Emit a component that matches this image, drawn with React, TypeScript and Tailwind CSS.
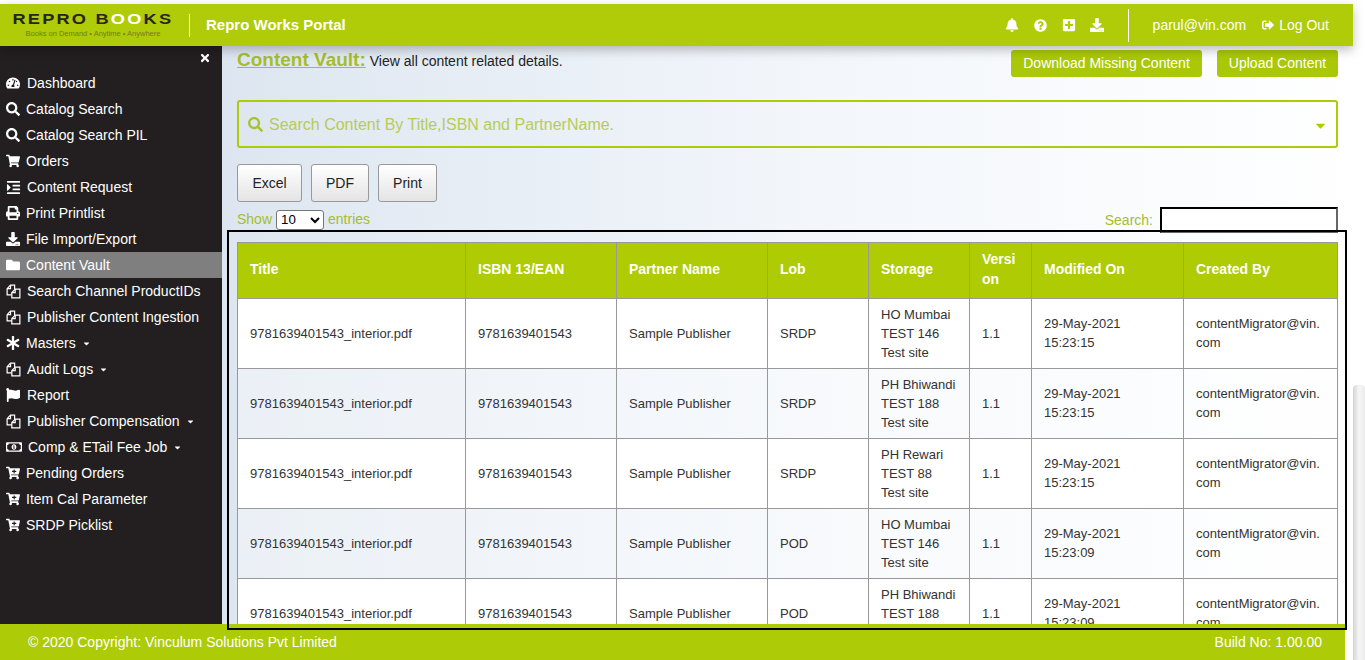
import { IconType } from "react-icons";
import {
  FaBell,
  FaCaretDown,
  FaCartPlus,
  FaDownload,
  FaFolder,
  FaIndent,
  FaPlusSquare,
  FaPrint,
  FaQuestionCircle,
  FaRegMoneyBillAlt,
  FaSearch,
  FaShoppingCart,
  FaSignOutAlt,
  FaTachometerAlt,
  FaTimes,
  FaAsterisk,
  FaFlag,
} from "react-icons/fa";

// font awesome 4 "files-o", the packaged one looks different
const FilesIcon: IconType = ({ className }) => (
  <svg viewBox="0 0 16 16" fill="none" stroke="currentColor" strokeWidth="1.3" className={className}>
    <path d="M6 11.5H1.2V5L4.8 1.2H9.2V5.5" />
    <path d="M4.8 1.2V5H1.2" />
    <path d="M6.2 9.2L9.8 5.5H14.8V14.8H6.2Z" />
    <path d="M9.8 5.5V9.2H6.2" />
  </svg>
);

const menu: { label: string; icon: IconType; caret?: boolean; active?: boolean; w?: string; size?: string }[] = [
  { label: "Dashboard", icon: FaTachometerAlt, w: "w-[21px]" },
  { label: "Catalog Search", icon: FaSearch },
  { label: "Catalog Search PIL", icon: FaSearch },
  { label: "Orders", icon: FaShoppingCart },
  { label: "Content Request", icon: FaIndent, w: "w-[21px]", size: "h-[15px] w-[15px]" },
  { label: "Print Printlist", icon: FaPrint },
  { label: "File Import/Export", icon: FaDownload },
  { label: "Content Vault", icon: FaFolder },
  { label: "Search Channel ProductIDs", icon: FilesIcon, w: "w-[21px]", size: "h-[15px] w-[15px]" },
  { label: "Publisher Content Ingestion", icon: FilesIcon, w: "w-[21px]", size: "h-[15px] w-[15px]" },
  { label: "Masters", icon: FaAsterisk, caret: true },
  { label: "Audit Logs", icon: FilesIcon, caret: true, w: "w-[21px]", size: "h-[15px] w-[15px]" },
  { label: "Report", icon: FaFlag, w: "w-[21px]" },
  { label: "Publisher Compensation", icon: FilesIcon, caret: true, w: "w-[21px]", size: "h-[15px] w-[15px]" },
  { label: "Comp & ETail Fee Job", icon: FaRegMoneyBillAlt, caret: true, w: "w-[22px]", size: "h-[16px] w-[16px]" },
  { label: "Pending Orders", icon: FaCartPlus },
  { label: "Item Cal Parameter", icon: FaCartPlus },
  { label: "SRDP Picklist", icon: FaCartPlus },
];

const rows = [
  { lob: "SRDP", storage: ["HO Mumbai", "TEST 146", "Test site"], time: "15:23:15" },
  { lob: "SRDP", storage: ["PH Bhiwandi", "TEST 188", "Test site"], time: "15:23:15" },
  { lob: "SRDP", storage: ["PH Rewari", "TEST 88", "Test site"], time: "15:23:15" },
  { lob: "POD", storage: ["HO Mumbai", "TEST 146", "Test site"], time: "15:23:09" },
  { lob: "POD", storage: ["PH Bhiwandi", "TEST 188", "Test site"], time: "15:23:09" },
];

const th = "border border-[#999] px-3 pb-[4px] text-left align-middle font-bold text-white text-[14px] leading-[20px]";
const td = "border border-[#999] px-3 align-middle text-[13px] leading-[19px] text-[#333]";

const Sidebar = () => (
  <aside className="w-[222px] shrink-0 bg-[#231f20] text-white">
    <div className="flex h-[24px] items-center justify-end pr-[11px]">
      <FaTimes className="h-[12px] w-[12px]" />
    </div>
    <ul>
      {menu.map((m) => (
        <li
          key={m.label}
          className={`flex h-[26px] items-center pl-[6px] text-[14px] ${m.label === "Content Vault" ? "bg-[#7f7f7f]" : ""}`}
        >
          <span className={`flex shrink-0 items-center ${m.w ?? "w-[20px]"}`}>
            <m.icon className={m.size ?? "h-[14px] w-[14px]"} />
          </span>
          <span>{m.label}</span>
          {m.caret && <FaCaretDown className="ml-[6px] h-[9px] w-[9px]" />}
        </li>
      ))}
    </ul>
  </aside>
);

export default function App() {
  return (
    <div className="relative h-[660px] w-[1365px] overflow-hidden bg-white font-['Liberation_Sans',Arial,sans-serif]">
      <div className="h-[4px]" />
      <header className="relative z-10 flex h-[42px] w-[1353px] items-center bg-[#b0cb07] text-white shadow-[0_4px_10px_rgba(0,0,0,0.25)]">
        <div className="flex w-[189px] shrink-0 flex-col items-center pr-[3px]">
          <div className="text-[14px] font-bold leading-[15px] tracking-[1.7px] text-[#26261c] [transform:scaleX(1.3)]">
            REPRO B<span className="text-white">OO</span>KS
          </div>
          <div className="mt-[2px] text-[7.5px] leading-[10px] text-[#6f7f20]">Books on Demand • Anytime • Anywhere</div>
        </div>
        <div className="h-[23px] w-px bg-white" />
        <div className="ml-[16px] text-[15px] font-bold">Repro Works Portal</div>
        <div className="ml-auto flex items-center">
          <FaBell className="h-[14px] w-[14px]" />
          <FaQuestionCircle className="ml-[15px] h-[13px] w-[13px]" />
          <FaPlusSquare className="ml-[15px] h-[14px] w-[14px]" />
          <FaDownload className="ml-[14px] h-[14px] w-[14px]" />
          <div className="ml-[24px] h-[33px] w-px bg-white" />
          <span className="ml-[24px] text-[14px]">parul@vin.com</span>
          <FaSignOutAlt className="ml-[16px] h-[12px] w-[12px]" />
          <span className="ml-[5px] mr-[24px] text-[14px]">Log Out</span>
        </div>
      </header>

      <div className="flex h-[578px]">
        <Sidebar />
        <main className="h-full flex-1 overflow-hidden bg-gradient-to-r from-[#dde6f0] via-[#f2f6fb] to-white pl-[15px] pr-[27px]">
          <div className="flex h-[54px] items-start justify-between">
            <div className="flex items-baseline">
              <span className="text-[19px] font-bold text-[#a5bd2e] underline">Content Vault:</span>
              <span className="ml-[4px] text-[14px] text-[#222]">View all content related details.</span>
            </div>
            <div className="mt-[4px] flex gap-[15px]">
              <button className="h-[27px] w-[191px] rounded-[3px] bg-[#aac808] text-[14px] text-white">Download Missing Content</button>
              <button className="h-[27px] w-[121px] rounded-[3px] bg-[#aac808] text-[14px] text-white">Upload Content</button>
            </div>
          </div>

          <div className="flex h-[48px] items-center rounded-[3px] border-2 border-[#aecb07] pl-[9px] pr-[8px]">
            <FaSearch className="h-[15px] w-[15px] text-[#a9c234]" />
            <span className="ml-[6px] mt-[1px] text-[16px] text-[#b7cc55]">Search Content By Title,ISBN and PartnerName.</span>
            <FaCaretDown className="ml-auto mt-[2px] h-[15px] w-[15px] text-[#aecb07]" />
          </div>

          <div className="mt-[16px] flex gap-[9px]">
            {[["Excel", "w-[65px]"], ["PDF", "w-[58px]"], ["Print", "w-[59px]"]].map(([t, w]) => (
              <button
                key={t}
                className={`h-[38px] ${w} rounded-[3px] border border-[#999] bg-gradient-to-b from-white to-[#e4e4e4] text-[14px] text-[#222]`}
              >
                {t}
              </button>
            ))}
          </div>

          <div className="mt-[5px] flex h-[35px] items-start justify-between text-[14px] text-[#a5bd2e]">
            <div className="mt-[2px] flex items-center">
              <span>Show</span>
              <select className="mx-[4px] h-[20px] w-[48px] rounded-[3px] border border-[#767676] bg-white text-[13.3px] text-black">
                <option>10</option>
              </select>
              <span>entries</span>
            </div>
            <div className="flex items-start">
              <span className="mr-[7px] mt-[3px]">Search:</span>
              <input className="h-[26px] w-[178px] border-2 border-black border-r-[#666] border-b-[#666] bg-white" />
            </div>
          </div>

          <table className="w-[1100px] table-fixed border-collapse">
            <colgroup>
              <col className="w-[228px]" />
              <col className="w-[151px]" />
              <col className="w-[151px]" />
              <col className="w-[101px]" />
              <col className="w-[101px]" />
              <col className="w-[62px]" />
              <col className="w-[152px]" />
              <col className="w-[154px]" />
            </colgroup>
            <thead>
              <tr className="h-[56px] bg-[#aecb04]">
                <th className={th}>Title</th>
                <th className={th}>ISBN 13/EAN</th>
                <th className={th}>Partner Name</th>
                <th className={th}>Lob</th>
                <th className={th}>Storage</th>
                <th className={th}>
                  Versi
                  <br />
                  on
                </th>
                <th className={th}>Modified On</th>
                <th className={th}>Created By</th>
              </tr>
            </thead>
            <tbody>
              {rows.map((r, i) => (
                <tr key={i} className={`h-[70px] ${i % 2 === 1 ? "bg-white/40" : "bg-white"}`}>
                  <td className={td}>9781639401543_interior.pdf</td>
                  <td className={td}>9781639401543</td>
                  <td className={td}>Sample Publisher</td>
                  <td className={td}>{r.lob}</td>
                  <td className={td}>
                    {r.storage.map((s) => (
                      <div key={s}>{s}</div>
                    ))}
                  </td>
                  <td className={td}>1.1</td>
                  <td className={`${td} pb-[2px]`}>
                    29-May-2021
                    <br />
                    {r.time}
                  </td>
                  <td className={`${td} pb-[2px]`}>
                    contentMigrator@vin.
                    <br />
                    com
                  </td>
                </tr>
              ))}
            </tbody>
          </table>
        </main>
      </div>

      <footer className="relative z-10 flex h-[36px] w-[1345px] items-center justify-between bg-[#aecb07] pl-[28px] pr-[23px] text-[14px] text-white">
        <span>© 2020 Copyright: Vinculum Solutions Pvt Limited</span>
        <span>Build No: 1.00.00</span>
      </footer>

      {/* black box drawn over the table and the footer */}
      <div className="pointer-events-none absolute left-[227px] top-[230px] z-20 h-[400px] w-[1120px] border-2 border-black" />

      {/* page scrollbar */}
      <div className="absolute right-0 top-[385px] z-20 h-[275px] w-[12px] rounded-t-[4px] bg-gradient-to-r from-[#d4d4d4] via-[#f6f6f6] to-[#ebebeb]" />
    </div>
  );
}
